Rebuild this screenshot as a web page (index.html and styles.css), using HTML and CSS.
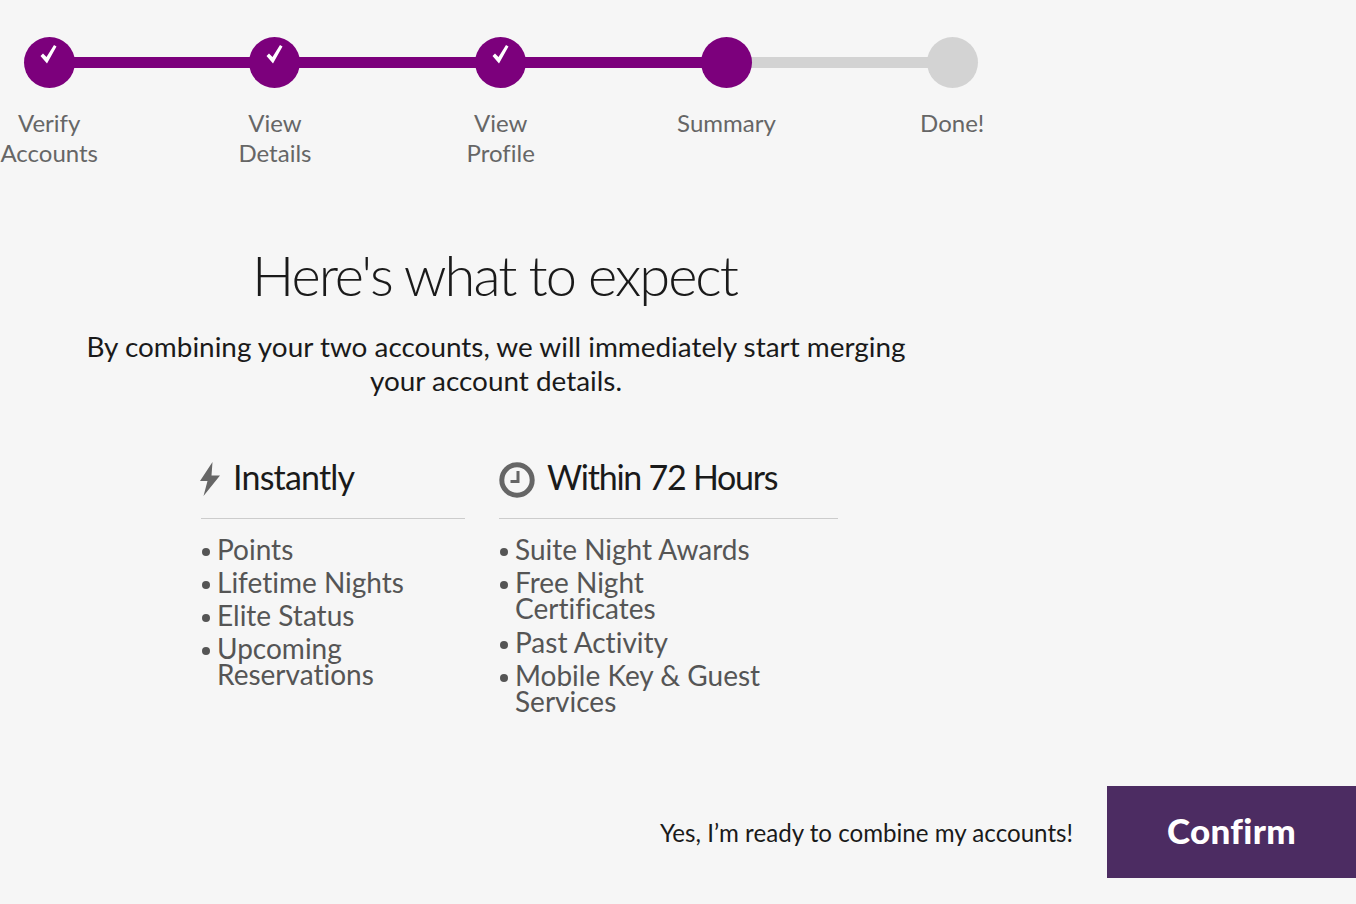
FILE: index.html
```html
<!DOCTYPE html>
<html lang="en">
<head>
    <meta charset="UTF-8">
    <meta name="viewport" content="width=device-width, initial-scale=1.0">
    <title>Combine Accounts</title>
    <link rel="stylesheet" href="styles.css">
</head>
<body>
    <ol class="stepper">
        <li class="step done">
            <span class="dot"><svg class="check" viewBox="0 0 17 19"><path d="M0.5 11 L3 8.5 L6.5 12 L14 0 L16.5 1.5 L7 18.5 Z"/></svg></span>
            <span class="step-label">Verify<br>Accounts</span>
        </li>
        <li class="step done">
            <span class="dot"><svg class="check" viewBox="0 0 17 19"><path d="M0.5 11 L3 8.5 L6.5 12 L14 0 L16.5 1.5 L7 18.5 Z"/></svg></span>
            <span class="step-label">View<br>Details</span>
        </li>
        <li class="step done">
            <span class="dot"><svg class="check" viewBox="0 0 17 19"><path d="M0.5 11 L3 8.5 L6.5 12 L14 0 L16.5 1.5 L7 18.5 Z"/></svg></span>
            <span class="step-label">View<br>Profile</span>
        </li>
        <li class="step current">
            <span class="dot"></span>
            <span class="step-label">Summary</span>
        </li>
        <li class="step">
            <span class="dot"></span>
            <span class="step-label">Done!</span>
        </li>
    </ol>

    <main class="content">
        <h1 class="title">Here's what to expect</h1>
        <p class="intro">By combining your two accounts, we will immediately start merging<br>your account details.</p>

        <div class="columns">
            <section class="column column-instant">
                <h2 class="column-title">
                    <svg class="icon-bolt" viewBox="0 0 20 34"><path d="M12.5 0 L0 19 L7.5 19 L3.5 34 L20 13.5 L11.5 13.5 Z"/></svg>
                    Instantly
                </h2>
                <ul class="items">
                    <li>Points</li>
                    <li>Lifetime Nights</li>
                    <li>Elite Status</li>
                    <li>Upcoming<br>Reservations</li>
                </ul>
            </section>
            <section class="column column-later">
                <h2 class="column-title">
                    <svg class="icon-clock" viewBox="0 0 36 36"><circle cx="18" cy="18" r="15.2"/><path d="M19 9 V19.5 H11.5"/></svg>
                    Within 72 Hours
                </h2>
                <ul class="items">
                    <li>Suite Night Awards</li>
                    <li>Free Night<br>Certificates</li>
                    <li>Past Activity</li>
                    <li>Mobile Key &amp; Guest<br>Services</li>
                </ul>
            </section>
        </div>
    </main>

    <footer class="confirm-bar">
        <span class="confirm-text">Yes, I’m ready to combine my accounts!</span>
        <button class="confirm-btn">Confirm</button>
    </footer>
</body>
</html>
```

FILE: styles.css
```css
* {
    margin: 0;
    padding: 0;
    box-sizing: border-box;
}

body {
    width: 1356px;
    height: 904px;
    background: #f6f6f6;
    font-family: 'Lato', 'Open Sans', sans-serif;
    font-variant-ligatures: none;
    overflow: hidden;
}

.stepper {
    display: flex;
    list-style: none;
    margin-left: -63.675px;
    padding-top: 37px;
    height: 169px;
}

.step {
    width: 225.75px;
    display: flex;
    flex-direction: column;
    align-items: center;
    position: relative;
}

/* connector to the next dot */
.step::after {
    content: '';
    position: absolute;
    top: 20px;
    left: 113px;
    width: 226px;
    height: 11px;
    background: #d3d3d3;
}

.step:last-child::after {
    display: none;
}

.step.done::after {
    background: #7c007c;
}

.dot {
    flex-shrink: 0;
    width: 51px;
    height: 51px;
    border-radius: 50%;
    background: #d3d3d3;
    position: relative;
    z-index: 1;
    display: flex;
    justify-content: center;
}

.done .dot,
.current .dot {
    background: #7c007c;
}

.check {
    width: 17px;
    height: 19px;
    margin-top: 8px;
    margin-right: 1px;
    fill: #fff;
}

.step-label {
    margin-top: 20px;
    font-size: 24px;
    line-height: 30px;
    color: #666;
    text-align: center;
}

.content {
    width: 920px;
    margin-left: 36px;
}

.title {
    margin-top: 76px;
    padding-right: 3px;
    font-size: 56px;
    line-height: 60px;
    font-weight: 300;
    letter-spacing: -2px;
    color: #1a1a1a;
    text-align: center;
}

.intro {
    margin-top: 24px;
    font-size: 27.9px;
    line-height: 34px;
    color: #1a1a1a;
    text-align: center;
}

.columns {
    display: flex;
    gap: 34px;
    margin-top: 59px;
    padding-left: 165px;
}

.column-instant {
    width: 264px;
}

.column-later {
    width: 339px;
}

.column-title {
    display: flex;
    align-items: center;
    height: 63px;
    font-size: 34px;
    font-weight: 400;
    letter-spacing: -0.8px;
    color: #1a1a1a;
    border-bottom: 1px solid #ccc;
    padding-bottom: 21px;
}

.column-later .column-title {
    letter-spacing: -1.25px;
}

.icon-bolt {
    width: 20px;
    height: 34px;
    margin-left: -1px;
    margin-right: 13px;
    margin-top: 4px;
    fill: #666;
}

.icon-clock {
    width: 36px;
    height: 36px;
    margin-right: 12px;
    margin-top: 6px;
}

.icon-clock circle,
.icon-clock path {
    fill: none;
    stroke: #666;
}

.icon-clock circle {
    stroke-width: 5;
}

.icon-clock path {
    stroke-width: 3;
}

.items {
    list-style: none;
    margin-top: 17px;
}

.items li {
    position: relative;
    padding-left: 16px;
    margin-bottom: 7px;
    font-size: 28px;
    line-height: 26px;
    color: #555;
}

.column-later .items li:nth-child(2) {
    margin-bottom: 8px;
}

.items li::before {
    content: '';
    position: absolute;
    left: 1px;
    top: 12px;
    width: 8px;
    height: 8px;
    border-radius: 50%;
    background: #555;
}

.confirm-bar {
    position: absolute;
    top: 786px;
    right: 0;
    display: flex;
    align-items: center;
    gap: 34px;
}

.confirm-text {
    font-size: 24.15px;
    color: #1a1a1a;
}

.confirm-btn {
    width: 249px;
    height: 92px;
    border: none;
    padding-bottom: 5px;
    background: #4c2c62;
    color: #fff;
    font-family: inherit;
    font-size: 35px;
    font-weight: 900;
    letter-spacing: 0.3px;
}
```
